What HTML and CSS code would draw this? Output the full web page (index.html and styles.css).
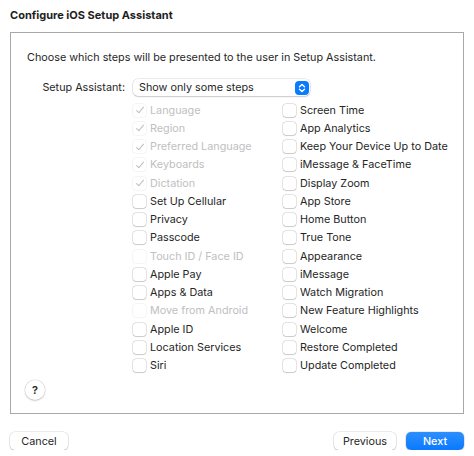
FILE: index.html
```html
<!DOCTYPE html>
<html lang="en">
<head>
    <meta charset="UTF-8">
    <title>Configure iOS Setup Assistant</title>
    <link rel="stylesheet" href="styles.css">
</head>
<body>
    <div class="sheet">
        <h1 class="sheet-title">Configure iOS Setup Assistant</h1>

        <div class="panel">
            <p class="intro">Choose which steps will be presented to the user in Setup Assistant.</p>

            <div class="setup-row">
                <span class="setup-label">Setup Assistant:</span>
                <div class="popup">
                    <span>Show only some steps</span>
                    <span class="popup-arrows">
                        <svg width="8" height="10" viewBox="0 0 8 10">
                            <path d="M1.5 3.8 L4 1.5 L6.5 3.8 M1.5 6.2 L4 8.5 L6.5 6.2" fill="none" stroke="#fff" stroke-width="1.4" stroke-linecap="round" stroke-linejoin="round"/>
                        </svg>
                    </span>
                </div>
            </div>

            <div class="steps">
                <div class="step-col">
                    <label class="step disabled checked"><span class="box"></span>Language</label>
                    <label class="step disabled checked"><span class="box"></span>Region</label>
                    <label class="step disabled checked"><span class="box"></span>Preferred Language</label>
                    <label class="step disabled checked"><span class="box"></span>Keyboards</label>
                    <label class="step disabled checked"><span class="box"></span>Dictation</label>
                    <label class="step"><span class="box"></span>Set Up Cellular</label>
                    <label class="step"><span class="box"></span>Privacy</label>
                    <label class="step"><span class="box"></span>Passcode</label>
                    <label class="step disabled"><span class="box"></span>Touch ID / Face ID</label>
                    <label class="step"><span class="box"></span>Apple Pay</label>
                    <label class="step"><span class="box"></span>Apps &amp; Data</label>
                    <label class="step disabled"><span class="box"></span>Move from Android</label>
                    <label class="step"><span class="box"></span>Apple ID</label>
                    <label class="step"><span class="box"></span>Location Services</label>
                    <label class="step"><span class="box"></span>Siri</label>
                </div>
                <div class="step-col">
                    <label class="step"><span class="box"></span>Screen Time</label>
                    <label class="step"><span class="box"></span>App Analytics</label>
                    <label class="step"><span class="box"></span>Keep Your Device Up to Date</label>
                    <label class="step"><span class="box"></span>iMessage &amp; FaceTime</label>
                    <label class="step"><span class="box"></span>Display Zoom</label>
                    <label class="step"><span class="box"></span>App Store</label>
                    <label class="step"><span class="box"></span>Home Button</label>
                    <label class="step"><span class="box"></span>True Tone</label>
                    <label class="step"><span class="box"></span>Appearance</label>
                    <label class="step"><span class="box"></span>iMessage</label>
                    <label class="step"><span class="box"></span>Watch Migration</label>
                    <label class="step"><span class="box"></span>New Feature Highlights</label>
                    <label class="step"><span class="box"></span>Welcome</label>
                    <label class="step"><span class="box"></span>Restore Completed</label>
                    <label class="step"><span class="box"></span>Update Completed</label>
                </div>
            </div>

            <button class="help">?</button>
        </div>

        <div class="actions">
            <button class="btn">Cancel</button>
            <div class="actions-right">
                <button class="btn btn-prev">Previous</button>
                <button class="btn btn-primary">Next</button>
            </div>
        </div>
    </div>
</body>
</html>
```

FILE: styles.css
```css
* {
    margin: 0;
    padding: 0;
    box-sizing: border-box;
}

body {
    background: #ffffff;
    font-family: Inter, "Noto Sans", Arial, sans-serif;
    font-size: 10.8px;
    color: #262626;
}

.sheet {
    padding: 8px 10px 0 10px;
}

.sheet-title {
    font-size: 11px;
    font-weight: 700;
    line-height: 15px;
    height: 24px;
    color: #1e1e1e;
}

.panel {
    border: 1px solid #a8a8a8;
    height: 382px;
    padding: 17px 16px 0 16px;
}

.intro {
    line-height: 16px;
}

.setup-row {
    display: flex;
    align-items: center;
    margin-top: 13px;
    height: 17px;
}

.setup-label {
    width: 98px;
    text-align: right;
    margin-right: 8px;
}

.popup {
    width: 177px;
    height: 17px;
    display: flex;
    align-items: center;
    justify-content: space-between;
    padding: 0 1px 0 6px;
    background: #fff;
    border-radius: 5px;
    box-shadow: 0 0 0 0.5px rgba(0,0,0,0.15), 0 1px 1.5px rgba(0,0,0,0.15);
}

.popup-arrows {
    width: 14px;
    height: 14px;
    border-radius: 4px;
    background: #0b7bfe;
    display: flex;
    align-items: center;
    justify-content: center;
}

.steps {
    display: flex;
    margin-left: 106px;
    margin-top: 5px;
}

.step-col {
    width: 150px;
    display: flex;
    flex-direction: column;
}

.step {
    display: flex;
    align-items: center;
    height: 18.25px;
    white-space: nowrap;
}

.box {
    width: 13px;
    height: 13px;
    margin-right: 4px;
    border-radius: 3px;
    background: #fff;
    box-shadow: 0 0 0 0.5px rgba(0,0,0,0.2), 0 0.5px 1px rgba(0,0,0,0.12);
    position: relative;
    flex-shrink: 0;
}

.step.disabled {
    color: #c0c0c0;
}

.step.disabled .box {
    box-shadow: 0 0 0 0.5px rgba(0,0,0,0.08);
}

.step.checked .box::after {
    content: "";
    position: absolute;
    left: 4.5px;
    top: 1.5px;
    width: 3px;
    height: 7px;
    border-right: 1.5px solid #bdbdbd;
    border-bottom: 1.5px solid #bdbdbd;
    transform: rotate(40deg);
}

.help {
    margin-top: 5px;
    margin-left: -2px;
    width: 20px;
    height: 20px;
    border-radius: 50%;
    border: none;
    background: #fff;
    box-shadow: 0 0 0 0.5px rgba(0,0,0,0.15), 0 1px 2px rgba(0,0,0,0.15);
    font-family: Inter, Arial, sans-serif;
    font-size: 11px;
    font-weight: 600;
    color: #262626;
}

.actions {
    display: flex;
    justify-content: space-between;
    margin-top: 18px;
}

.actions-right {
    display: flex;
    gap: 10px;
}

.btn {
    height: 18px;
    width: 58px;
    border: none;
    border-radius: 5px;
    background: #fff;
    font-family: Inter, Arial, sans-serif;
    font-size: 10.8px;
    color: #262626;
    box-shadow: 0 0 0 0.5px rgba(0,0,0,0.15), 0 1px 1.5px rgba(0,0,0,0.15);
}

.btn-prev {
    width: 62px;
}

.btn-primary {
    background: linear-gradient(#2d8fff, #0a7aff);
    color: #fff;
    font-weight: 500;
}
```
